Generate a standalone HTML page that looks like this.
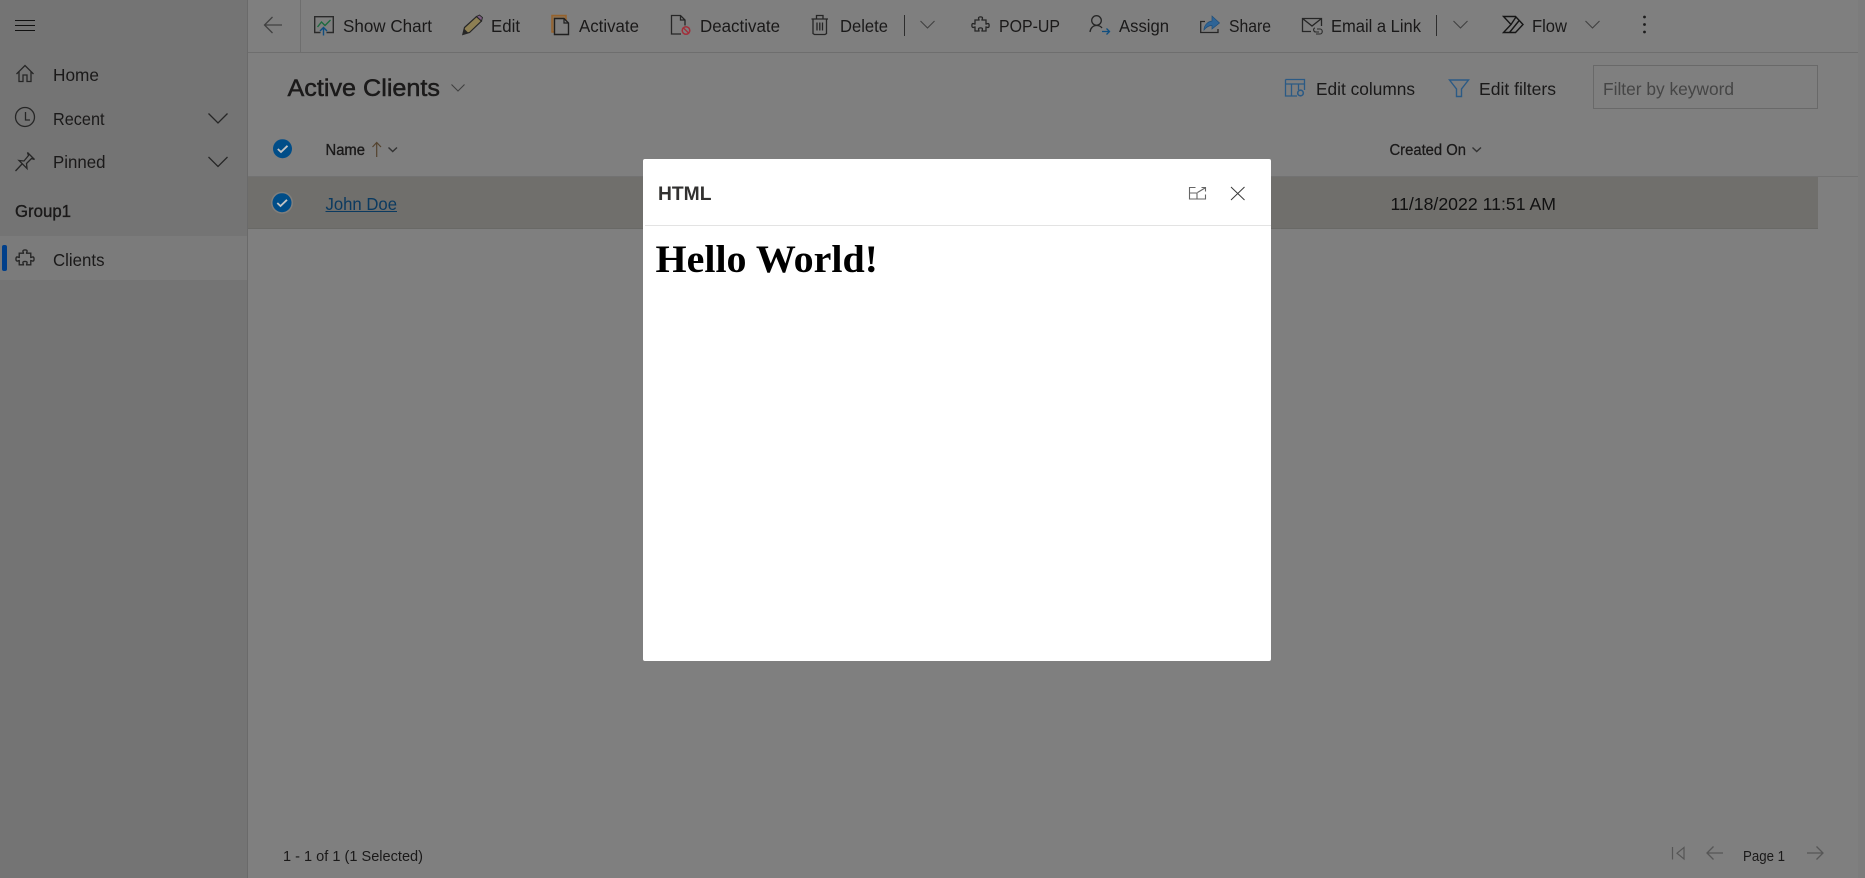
<!DOCTYPE html>
<html lang="en"><head><meta charset="utf-8"><title>Active Clients</title>
<style>
html,body{margin:0;padding:0;background:#7f7f7f;overflow:hidden}
svg{display:block}
text{font-family:"Liberation Sans",sans-serif;font-size:17.5px;fill:#1a1919}
.s{stroke:#1a1919;stroke-width:.35px}
.ic{fill:none;stroke:#262626;stroke-width:1.3}
.ch{fill:none;stroke:#404040;stroke-width:1.1}
</style></head><body>
<svg xmlns="http://www.w3.org/2000/svg" width="1865" height="878" viewBox="0 0 1865 878">

<!-- backgrounds -->
<rect width="1865" height="878" fill="#7f7f7f"/>
<rect x="1858" width="7" height="878" fill="#7c7c7c"/>
<rect width="247" height="878" fill="#747474"/>
<rect x="247" width="1" height="878" fill="#6a6a6a"/>
<rect y="236" width="247" height="44" fill="#7b7b7b"/>
<rect x="2" y="245" width="5" height="26" rx="2" fill="#003f8a"/>
<rect x="248" y="52" width="1610" height="1" fill="#6e6e6e"/>
<rect x="300" width="1" height="52" fill="#6e6e6e"/>
<rect x="248" y="176" width="1610" height="1" fill="#727272"/>
<rect x="248" y="177" width="1570" height="51" fill="#706f6c"/>
<rect x="248" y="228" width="1570" height="1" fill="#696966"/>

<!-- sidebar -->
<path d="M15 20.5h20M15 25.5h20M15 30.5h20" stroke="#111" stroke-width="1" fill="none"/>
<path class="ic" d="M16.5 74L25 65.5L33.5 74M19 71.5V81.5H23V75H27V81.5H31V71.5"/>
<circle class="ic" cx="25" cy="117" r="9.5"/>
<path class="ic" d="M25.5 112V120H30"/>
<path class="ic" d="M15.5 171L22 164M19 160.5L24 161L28.5 155.5L27.5 152.5L34.5 159.5L31.5 158.5L26.5 163.500L27 168.500Z"/>
<path class="ic" transform="translate(14.5 248.5) scale(1.05)" stroke-width="1.4" d="M8 2.5c0-1.5 4-1.5 4 0c0 .8-.5 1-.5 2h4v4c1 0 1.2-.5 2-.5c1.5 0 1.5 4 0 4c-.8 0-1-.5-2-.5v4h-4c0-1 .5-1.2.5-2c0-1.5-4-1.5-4 0c0 .8.5 1 .5 2h-4v-4c-1 0-1.2.5-2 .5c-1.5 0-1.5-4 0-4c.8 0 1 .5 2 .5v-4h4c0-1-.5-1.2-.5-2z"/>
<text x="53" y="81" textLength="46" lengthAdjust="spacingAndGlyphs">Home</text>
<text x="53" y="125" textLength="51.5" lengthAdjust="spacingAndGlyphs">Recent</text>
<text x="53" y="168" textLength="52.5" lengthAdjust="spacingAndGlyphs">Pinned</text>
<text x="15" y="217" textLength="56" lengthAdjust="spacingAndGlyphs" class="s">Group1</text>
<text x="53" y="266" textLength="51.5" lengthAdjust="spacingAndGlyphs">Clients</text>
<path class="ic" d="M208.500 113.5L218 123L227.500 113.5M208.500 157L218 166.5L227.500 157"/>

<!-- toolbar -->
<path fill="none" stroke="#404040" stroke-width="1.3" d="M282 25H265M272.5 17L264.5 25L272.5 33"/>
<path fill="none" stroke="#2a2a2a" stroke-width="1.4" d="M320.500 32.500H314.700V16.700H333.300V32.500H326.500"/>
<path fill="none" stroke="#1d6a3e" stroke-width="1.4" d="M317.5 27L321.5 22L325 25.5L330.5 20"/>
<path fill="none" stroke="#0f4e80" stroke-width="1.4" d="M323.5 35.5V28M320 31L323.5 27.5L327 31"/>
<text x="343" y="32" textLength="89" lengthAdjust="spacingAndGlyphs">Show Chart</text>
<path d="M462.800 34.500L464.500 27.500L476.500 16.500L481.500 21L469.500 32.500Z" fill="#8d7f53" stroke="#262626" stroke-width="1.200"/>
<path d="M476.500 16.500L479.500 15L482.500 17.500L481.500 21Z" fill="#7c5d82" stroke="#262626" stroke-width=".9"/>
<path d="M463 34.500L464.500 29L468 32.500Z" fill="#262626"/>
<text x="491" y="32" textLength="29" lengthAdjust="spacingAndGlyphs">Edit</text>
<rect x="552" y="15.5" width="14" height="16.5" fill="#8d7353" stroke="#96622c" stroke-width="1.5"/>
<path d="M554.500 18.500H564L568.500 23V34.500H554.500Z" fill="#7f7f7f" stroke="#1f1f1f" stroke-width="1.4"/>
<path fill="none" stroke="#1f1f1f" stroke-width="1.200" d="M564 18.500V23H568.500"/>
<text x="579" y="32" textLength="60" lengthAdjust="spacingAndGlyphs">Activate</text>
<path class="ic" d="M681 34H671.500V15.500H680.500L685 20V25.500M680.500 15.500V20H685"/>
<circle cx="686" cy="30.500" r="3.800" fill="none" stroke="#a22f3a" stroke-width="1.500"/>
<path d="M683.500 28L688.500 33" stroke="#a22f3a" stroke-width="1.300"/>
<text x="700" y="32" textLength="80" lengthAdjust="spacingAndGlyphs">Deactivate</text>
<path class="ic" d="M811.500 19H828M816.500 19V15.500H823V19M813 19V33.500L814.500 34.500H825L826.500 33.500V19M817 22.500V30.500M819.800 22.500V30.500M822.500 22.500V30.500"/>
<text x="840" y="32" textLength="48" lengthAdjust="spacingAndGlyphs">Delete</text>
<rect x="904" y="15" width="1" height="21" fill="#2d2d2d"/>
<path class="ch" d="M920.500 21L927.500 28L934.500 21"/>
<path class="ic" transform="translate(970.5 15.5)" stroke-width="1.400" d="M8 2.5c0-1.5 4-1.5 4 0c0 .8-.5 1-.5 2h4v4c1 0 1.2-.5 2-.5c1.5 0 1.5 4 0 4c-.8 0-1-.5-2-.5v4h-4c0-1 .5-1.2.5-2c0-1.5-4-1.5-4 0c0 .8.5 1 .5 2h-4v-4c-1 0-1.2.5-2 .5c-1.5 0-1.5-4 0-4c.8 0 1 .5 2 .5v-4h4c0-1-.5-1.2-.5-2z"/>
<text x="999" y="32" textLength="61" lengthAdjust="spacingAndGlyphs">POP-UP</text>
<circle class="ic" cx="1096.500" cy="20.500" r="4.800"/>
<path class="ic" d="M1090 32C1090.500 28 1093 25.500 1096.500 25.500C1099 25.500 1101 26.500 1102 28"/>
<path fill="none" stroke="#0f4e80" stroke-width="1.300" d="M1102 31.500H1109.500M1106.500 28.500L1109.500 31.500L1106.500 34.500"/>
<text x="1119" y="32" textLength="50" lengthAdjust="spacingAndGlyphs">Assign</text>
<path class="ic" d="M1205 21.500H1200.700V32.500H1218V29"/>
<path d="M1204 30C1204 25 1208 21.500 1212 21V16L1219.500 23L1212 29V25.500C1209 25.500 1206 27.500 1204 30Z" fill="#2e6496" stroke="#1f4d78" stroke-width=".7"/>
<text x="1229" y="32" textLength="42" lengthAdjust="spacingAndGlyphs">Share</text>
<path class="ic" d="M1311 31.500H1302.500V18.500H1321.500V26M1302.500 18.500L1312 26L1321.500 18.500"/>
<path fill="none" stroke="#2a2a2a" stroke-width="1.100" d="M1315 28C1313 28 1313 32 1316 32H1319M1317 29H1320C1323 29 1323 34 1320 34H1316"/>
<text x="1331" y="32" textLength="90" lengthAdjust="spacingAndGlyphs">Email a Link</text>
<rect x="1436" y="15" width="1" height="21" fill="#2d2d2d"/>
<path class="ch" d="M1453.500 21L1460.500 28L1467.500 21"/>
<path fill="none" stroke="#151515" stroke-width="1.400" d="M1503.500 16.500H1515.500L1523 24.500L1515.500 32.500H1503.500L1511 24.500ZM1509.500 32.500L1519.200 20.500M1511 24.500L1516 17"/>
<text x="1532" y="32" textLength="35" lengthAdjust="spacingAndGlyphs">Flow</text>
<path class="ch" d="M1585.500 21L1592.500 28L1599.500 21"/>
<circle cx="1644.500" cy="17" r="1.400" fill="#1c1c1c"/><circle cx="1644.500" cy="24.500" r="1.400" fill="#1c1c1c"/><circle cx="1644.500" cy="32" r="1.400" fill="#1c1c1c"/>

<!-- command row -->
<text x="287.500" y="96" textLength="152.500" lengthAdjust="spacingAndGlyphs" style="font-size:24.5px;stroke:#1b1a1a;stroke-width:.5px;fill:#1b1a1a">Active Clients</text>
<path class="ch" d="M451.500 84.500L458 91L464.500 84.500"/>
<path fill="none" stroke="#2b5a85" stroke-width="1.300" d="M1285.500 79.500H1304.500V90M1285.500 79.500V96H1297M1285.500 84H1304.500M1291.500 84V96M1298.500 84V90"/>
<circle cx="1300.500" cy="93" r="2.800" fill="none" stroke="#2b5a85" stroke-width="1.600"/>
<text x="1316" y="95" textLength="99" lengthAdjust="spacingAndGlyphs">Edit columns</text>
<path fill="none" stroke="#2b5a85" stroke-width="1.400" d="M1449.500 80H1468.500L1461.500 89V96.500H1456.500V89Z"/>
<text x="1479" y="95" textLength="77" lengthAdjust="spacingAndGlyphs">Edit filters</text>
<rect x="1593.500" y="65.500" width="224" height="43" fill="none" stroke="#696969"/>
<text x="1603" y="95" textLength="131" lengthAdjust="spacingAndGlyphs" style="fill:#454545">Filter by keyword</text>

<!-- list header -->
<circle cx="282.500" cy="148.700" r="9.500" fill="#004d88"/>
<path d="M277.800 149L281 152L287.500 145.800" fill="none" stroke="#c4c4c4" stroke-width="1.800"/>
<text x="325.500" y="155" textLength="39.500" lengthAdjust="spacingAndGlyphs" class="s" style="font-size:15.5px">Name</text>
<path fill="none" stroke="#54432e" stroke-width="1.200" d="M376.700 157V142.500M372.500 147L376.700 142.500L381 147"/>
<path fill="none" stroke="#333" stroke-width="1.400" d="M388.500 147.500L392.700 151.500L397 147.500"/>
<text x="1389.500" y="155" textLength="76.500" lengthAdjust="spacingAndGlyphs" style="font-size:15.5px;stroke:#1a1919;stroke-width:.25px">Created On</text>
<path fill="none" stroke="#333" stroke-width="1.400" d="M1472.500 147.500L1476.700 151.500L1481 147.500"/>

<!-- row -->
<circle cx="282" cy="202.700" r="11" fill="#817f7c"/>
<circle cx="282" cy="202.700" r="9.500" fill="#004d88"/>
<path d="M277.300 203L280.500 206L287 199.800" fill="none" stroke="#c4c4c4" stroke-width="1.800"/>
<text x="325.500" y="210" textLength="71.500" lengthAdjust="spacingAndGlyphs" style="fill:#0b3a60">John Doe</text>
<rect x="325.500" y="211" width="71.500" height="1" fill="#0b3a60"/>
<text x="1390.500" y="210" textLength="165.500" lengthAdjust="spacingAndGlyphs" style="fill:#111">11/18/2022 11:51 AM</text>

<!-- footer -->
<text x="283" y="861" textLength="140" lengthAdjust="spacingAndGlyphs" style="font-size:15px">1 - 1 of 1 (1 Selected)</text>
<text x="1743" y="861" textLength="42" lengthAdjust="spacingAndGlyphs" style="font-size:15px">Page 1</text>
<path fill="none" stroke="#565656" stroke-width="1.200" d="M1672.500 847V859.500M1684 847.500V859L1677 853.200Z"/>
<path fill="none" stroke="#565656" stroke-width="1.300" d="M1723 853H1707M1713.500 846.500L1707 853L1713.500 859.500"/>
<path fill="none" stroke="#565656" stroke-width="1.300" d="M1807 853H1823M1816.500 846.500L1823 853L1816.500 859.500"/>

<!-- dialog -->
<rect x="643" y="159" width="628" height="502" rx="2" fill="#fff"/>
<rect x="645" y="225" width="626" height="1" fill="#e3e3e3"/>
<text x="658" y="200" textLength="53.500" lengthAdjust="spacingAndGlyphs" style="font-size:19.5px;font-weight:700;fill:#323130">HTML</text>
<path fill="none" stroke="#666" stroke-width="1.100" d="M1195.500 187.500H1189.500V199H1205.500V194.500M1189.500 193H1197V199M1197.500 192.500L1205 188M1201.500 187.500H1205.500V191.500"/>
<path fill="none" stroke="#3a3a3a" stroke-width="1" d="M1231 187L1244.500 200M1244.500 187L1231 200"/>
<text x="655.500" y="272" textLength="222.500" lengthAdjust="spacingAndGlyphs" style='font-family:"Liberation Serif",serif;font-size:39.500px;font-weight:700;fill:#000'>Hello World!</text>
</svg>
</body></html>
